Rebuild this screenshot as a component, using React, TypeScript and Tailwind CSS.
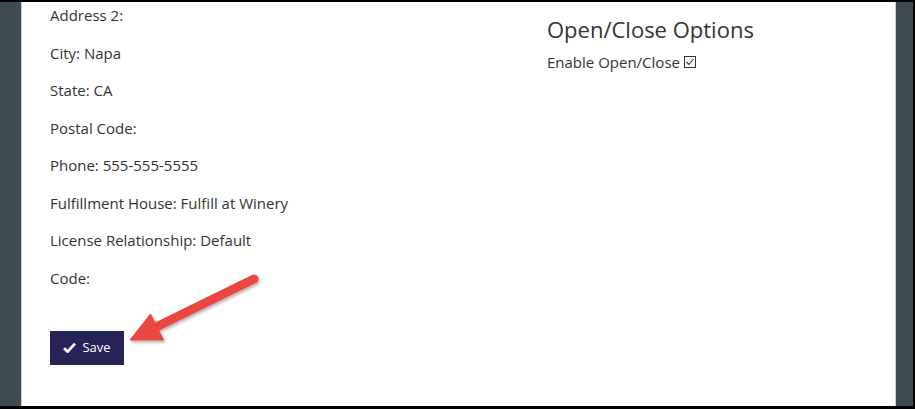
import React from 'react';

const fields = [
  'Address 2:',
  'City: Napa',
  'State: CA',
  'Postal Code:',
  'Phone: 555-555-5555',
  'Fulfillment House: Fulfill at Winery',
  'License Relationship: Default',
  'Code:',
];

const font = { fontFamily: '"Open Sans", "Liberation Sans", sans-serif' };

export default function App() {
  return (
    <div
      className="relative w-[915px] h-[409px] bg-black border-t-2 border-r-2 border-b-[3px] border-black overflow-hidden"
      style={font}
    >
      <div className="flex h-full">
        {/* Left rail */}
        <div className="w-[22px] h-full bg-[#3e4b53] border-r border-[#c9d0d4]" />

        {/* Content */}
        <div className="flex-1 h-full bg-white flex pt-[3px]">
          <div className="w-[525px] pl-[28px]">
            {fields.map((f) => (
              <p key={f} className="text-[15px] leading-[20px] text-[#333] mb-[17.5px]">
                {f}
              </p>
            ))}
            <button className="mt-[43px] w-[74px] h-[34px] bg-[#252459] text-white text-[13px] flex items-center justify-center gap-[6px]">
              <svg width="13" height="11" viewBox="0 0 13 11">
                <path d="M1 6.2 L4.6 9.6 L12 1.6" fill="none" stroke="#fff" strokeWidth="2.8" strokeLinejoin="miter" />
              </svg>
              <span>Save</span>
            </button>
          </div>

          <div className="pt-[9px]">
            <h2 className="text-[22px] leading-[30px] text-[#333]">Open/Close Options</h2>
            <div className="mt-[8px] flex items-center gap-[4px] text-[15px] leading-[20px] text-[#333]">
              <span>Enable Open/Close</span>
              <svg width="12" height="12" viewBox="0 0 12 12">
                <rect x="0.5" y="0.5" width="11" height="11" fill="none" stroke="#333" strokeWidth="1" />
                <path d="M2.5 6 L5 8.5 L9.5 3" fill="none" stroke="#333" strokeWidth="1.1" />
              </svg>
            </div>
          </div>
        </div>

        {/* Right rail */}
        <div className="w-[18px] h-full bg-[#3e4b53] border-l border-[#c9d0d4]" />
      </div>

      {/* Annotation arrow */}
      <svg className="absolute left-0 top-0 pointer-events-none" width="915" height="409" viewBox="0 0 915 409">
        <defs>
          <filter id="sh" x="-20%" y="-20%" width="140%" height="140%">
            <feDropShadow dx="1.5" dy="2" stdDeviation="1.5" floodColor="#000" floodOpacity="0.3" />
          </filter>
        </defs>
        <g filter="url(#sh)" fill="#e9473f" stroke="#e9473f">
          <line x1="254" y1="277" x2="152" y2="327" strokeWidth="9" strokeLinecap="round" />
          <polygon points="130,338 150.5,312 163.5,338" strokeWidth="1" strokeLinejoin="round" />
        </g>
      </svg>
    </div>
  );
}
